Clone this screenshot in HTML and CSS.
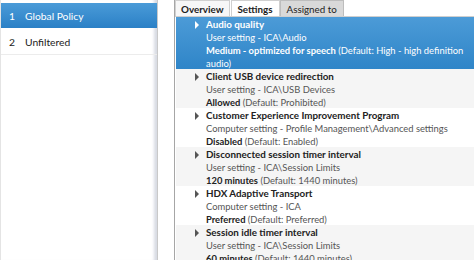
FILE: index.html
```html
<!DOCTYPE html>
<html lang="en">
<head>
  <meta charset="UTF-8" />
  <title>Policies</title>
  <link rel="stylesheet" href="styles.css">
</head>
<body>

<div class="layout">
  <!-- Daftar policy -->
  <div class="policies">
    <div class="policy selected"><span class="num">1</span>Global Policy</div>
    <div class="policy"><span class="num">2</span>Unfiltered</div>
  </div>

  <!-- Detail -->
  <div class="details">
    <div class="tabs">
      <div class="tab">Overview</div>
      <div class="tab active">Settings</div>
      <div class="tab off">Assigned to</div>
    </div>

    <div class="settings">
      <div class="item selected">
        <div class="name">Audio quality</div>
        <div>User setting - ICA\Audio</div>
        <div><b>Medium - optimized for speech</b> (Default: High - high definition audio)</div>
      </div>
      <div class="item alt">
        <div class="name">Client USB device redirection</div>
        <div>User setting - ICA\USB Devices</div>
        <div><b>Allowed</b> (Default: Prohibited)</div>
      </div>
      <div class="item">
        <div class="name">Customer Experience Improvement Program</div>
        <div>Computer setting - Profile Management\Advanced settings</div>
        <div><b>Disabled</b> (Default: Enabled)</div>
      </div>
      <div class="item alt">
        <div class="name">Disconnected session timer interval</div>
        <div>User setting - ICA\Session Limits</div>
        <div><b>120 minutes</b> (Default: 1440 minutes)</div>
      </div>
      <div class="item">
        <div class="name">HDX Adaptive Transport</div>
        <div>Computer setting - ICA</div>
        <div><b>Preferred</b> (Default: Preferred)</div>
      </div>
      <div class="item alt">
        <div class="name">Session idle timer interval</div>
        <div>User setting - ICA\Session Limits</div>
        <div><b>60 minutes</b> (Default: 1440 minutes)</div>
      </div>
    </div>
  </div>
</div>

</body>
</html>
```

FILE: styles.css
```css
* { margin: 0; padding: 0; box-sizing: border-box; }
body {
  font-family: 'Lato', sans-serif;
  font-size: 9.4px;
  color: #333;
  background: #fff;
  overflow: hidden;
}

.layout {
  display: flex;
  height: 260px;
  gap: 16px;
}

.policies {
  width: 158px;
  border-left: 1px solid #e4e4e4;
  box-shadow: inset -5px 0 3px -2px #d8dbe4;
  border-right: 1px solid #c9c9c9;
  padding-top: 3px;
}

.policy {
  display: flex;
  align-items: center;
  height: 25px;
  padding-left: 8px;
  font-size: 10.3px;
  color: #222;
  border-bottom: 1px solid #ececec;
  margin-bottom: 1px;
}

.policy .num { width: 16px; }

.policy.selected {
  background: linear-gradient(#4a9bd8, #2b80c6);
  color: #fff;
  border-bottom: none;
  margin-bottom: 2px;
}

.details {
  flex: 1;
  border-left: 1px solid #a6a6a6;
  display: flex;
  flex-direction: column;
}

.tabs {
  display: flex;
  height: 17px;
  border-bottom: 1px solid #cfcfcf;
}

.tab {
  padding: 0 5px;
  font-weight: 700;
  font-size: 9.8px;
  line-height: 16px;
  color: #222;
  border: 1px solid #d0d0d0;
  border-bottom: none;
  background: #f7f7f7;
}

.tab.active { background: #fff; margin-left: 1px; padding: 0 6px; }
.tab.off {
  font-weight: 400;
  background: #d9d9d9;
  border-color: #bdbdbd;
  padding: 0 6px;
}

.settings { padding-left: 1px; }

.item {
  position: relative;
  padding: 1px 4px 0 30px;
  line-height: 13px;
  color: #555;
  height: 39px;
}

.item b, .item .name { font-weight: 700; color: #222; }
.item .name { font-size: 9.8px; }

.item .name::before {
  content: "";
  position: absolute;
  left: 19px;
  top: 4px;
  border-left: 4px solid #555;
  border-top: 4px solid transparent;
  border-bottom: 4px solid transparent;
}

.item.alt { background: #f5f5f5; }

.item.selected {
  height: 52px;
  background: linear-gradient(#4c9bd7, #2f85c8);
  color: #fff;
}
.item.selected b, .item.selected .name { color: #fff; }
.item.selected .name::before { border-left-color: #fff; }
```
